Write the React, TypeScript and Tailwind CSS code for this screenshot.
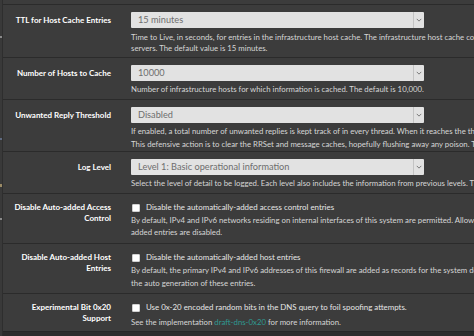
import type { ReactNode } from 'react';

const font = { fontFamily: 'Lato, "Liberation Sans", sans-serif' };

function Chevron() {
  return (
    <svg viewBox="0 0 8 5" className="h-[4px] w-[6px]" fill="none" stroke="#6f6f6f" strokeWidth="1.2">
      <path d="M1 1l3 3 3-3" />
    </svg>
  );
}

function Select({ value }: { value: string }) {
  return (
    <div className="flex h-[16px] w-[293px] items-center rounded-[1px] bg-[#e2e2e2]">
      <span className="flex-1 pl-[7px] text-[9.2px] leading-none text-[#6e6e6e]">{value}</span>
      <span className="flex h-full w-[11px] items-center justify-center border-l border-[#c4c4c4]">
        <Chevron />
      </span>
    </div>
  );
}

function Checkbox({ text }: { text: string }) {
  return (
    <div className="flex h-[12px] items-center gap-[6px]">
      <span className="ml-[1px] h-[8px] w-[8px] rounded-[1px] border border-[#d0d0d0] bg-white" />
      <span className="whitespace-nowrap text-[7.9px] text-[#e6e6e6]">{text}</span>
    </div>
  );
}

function Help({ lines, className = '' }: { lines: ReactNode[]; className?: string }) {
  return (
    <div className={`text-[7.8px] text-[#d6d6d6] ${className}`}>
      {lines.map((l, i) => (
        <div key={i} className="whitespace-nowrap">
          {l}
        </div>
      ))}
    </div>
  );
}

function Row({
  label,
  height,
  checkbox,
  children,
}: {
  label: string[];
  height: string;
  checkbox?: boolean;
  children: ReactNode;
}) {
  return (
    <div className={`flex border-t border-[#2b2b2b] ${height}`}>
      <div
        className={`w-[128px] shrink-0 pr-[20px] text-right text-[8px] font-bold text-white ${
          checkbox ? 'pt-[8px] leading-[11px]' : 'pt-[7px] leading-[16px]'
        }`}
      >
        {label.map((l) => (
          <div key={l} className="whitespace-nowrap">
            {l}
          </div>
        ))}
      </div>
      <div className={`flex-1 ${checkbox ? 'pt-[8px]' : 'pt-[7px]'}`}>{children}</div>
    </div>
  );
}

export default function App() {
  return (
    <div className="flex h-[336px] w-[474px] overflow-hidden bg-[#3c3c3c]" style={font}>
      <div className="relative w-[3px] shrink-0 border-r border-[#2e2e2e] bg-[#393939]">
        <span className="absolute left-0 top-[36px] h-[2px] w-[2px] bg-[#8a8a8a]" />
        <span className="absolute left-0 top-[138px] h-[2px] w-[2px] bg-[#5f6a80]" />
        <span className="absolute left-0 top-[184px] h-[3px] w-[2px] bg-[#9a8a66]" />
        <span className="absolute left-0 top-[218px] h-[2px] w-[2px] bg-[#8a8a8a]" />
      </div>

      <div className="flex w-[800px] shrink-0 flex-col">
        <div className="h-[4px] shrink-0" />

        <Row label={['TTL for Host Cache Entries']} height="h-[53px]">
          <Select value="15 minutes" />
          <Help
            className="mt-[4px] leading-[11px]"
            lines={[
              'Time to Live, in seconds, for entries in the infrastructure host cache. The infrastructure host cache contains round trip timing, lameness and EDNS support information for DNS',
              'servers. The default value is 15 minutes.',
            ]}
          />
        </Row>

        <Row label={['Number of Hosts to Cache']} height="h-[42px]">
          <Select value="10000" />
          <Help
            className="mt-[3px] leading-[11px]"
            lines={['Number of infrastructure hosts for which information is cached. The default is 10,000.']}
          />
        </Row>

        <Row label={['Unwanted Reply Threshold']} height="h-[52px]">
          <Select value="Disabled" />
          <Help
            className="mt-[2px] leading-[12.5px]"
            lines={[
              'If enabled, a total number of unwanted replies is kept track of in every thread. When it reaches the threshold, a defensive action is taken and a warning is printed to the log file.',
              'This defensive action is to clear the RRSet and message caches, hopefully flushing away any poison. The default is disabled, but if enabled a value of 10 million is suggested.',
            ]}
          />
        </Row>

        <Row label={['Log Level']} height="h-[42px]">
          <Select value="Level 1: Basic operational information" />
          <Help
            className="mt-[3px] leading-[11px]"
            lines={[
              'Select the level of detail to be logged. Each level also includes the information from previous levels. The default is basic operational information (level 1).',
            ]}
          />
        </Row>

        <Row label={['Disable Auto-added Access', 'Control']} height="h-[50px]" checkbox>
          <Checkbox text="Disable the automatically-added access control entries" />
          <Help
            className="leading-[12px]"
            lines={[
              'By default, IPv4 and IPv6 networks residing on internal interfaces of this system are permitted. Allowed networks must be manually configured on the Access Lists tab if the auto-',
              'added entries are disabled.',
            ]}
          />
        </Row>

        <Row label={['Disable Auto-added Host', 'Entries']} height="h-[50px]" checkbox>
          <Checkbox text="Disable the automatically-added host entries" />
          <Help
            className="leading-[12.5px]"
            lines={[
              'By default, the primary IPv4 and IPv6 addresses of this firewall are added as records for the system domain of this system in the DNS Resolver. This option disables',
              'the auto generation of these entries.',
            ]}
          />
        </Row>

        <Row label={['Experimental Bit 0x20', 'Support']} height="h-[38px]" checkbox>
          <Checkbox text="Use 0x-20 encoded random bits in the DNS query to foil spoofing attempts." />
          <Help
            className="mt-[2px] leading-[12px]"
            lines={[
              <>
                See the implementation <span className="text-[#2f9a92]">draft-dns-0x20</span> for more
                information.
              </>,
            ]}
          />
        </Row>

        <div className="flex-1 border-t border-[#262626] bg-[#2c2c2c]" />
      </div>
    </div>
  );
}
